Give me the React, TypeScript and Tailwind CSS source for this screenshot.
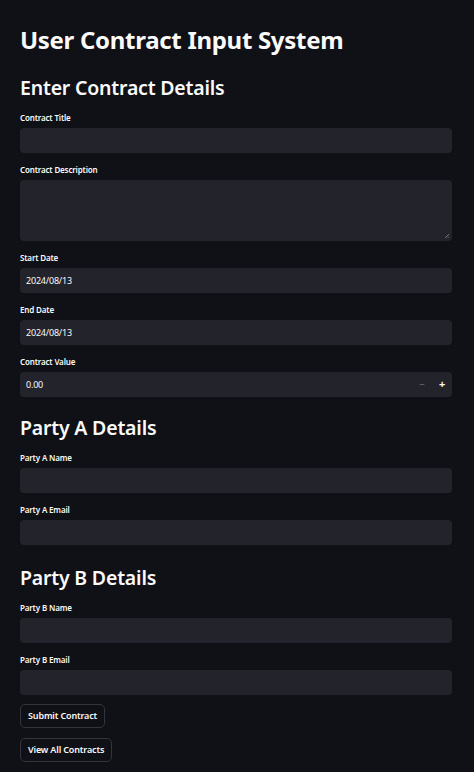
import { useState } from "react";

const Field = ({ label, value, tall }: { label: string; value?: string; tall?: boolean }) => {
  return (
    <div className="flex flex-col">
      <label className="text-[8px] font-semibold text-[#fafafa] leading-[12px] h-[12px] mb-[4px] tracking-[-0.15px]">{label}</label>
      {tall ? (
        <div className="relative h-[61px] rounded-[4px] bg-[#22232b]">
          <svg className="absolute right-[2px] bottom-[2px]" width="6" height="6" viewBox="0 0 6 6">
            <path d="M5 1 L1 5 M5 3.5 L3.5 5" stroke="#888" strokeWidth="0.8" />
          </svg>
        </div>
      ) : (
        <div className="h-[25px] rounded-[4px] bg-[#22232b] flex items-center px-[6px] text-[9px] text-[#fafafa] tracking-[-0.2px]">
          {value}
        </div>
      )}
    </div>
  );
};

const App = () => {
  const [value] = useState("0.00");
  return (
    <div
      className="min-h-[772px] bg-[#101116] text-[#fafafa] pl-[20px] pr-[22px] pt-[23px] pb-[10px]"
      style={{ fontFamily: '"Noto Sans", sans-serif' }}
    >
      <h1 className="text-[24px] font-bold leading-[34px] tracking-[-0.3px]">User Contract Input System</h1>
      <h2 className="text-[19.5px] font-semibold leading-[28px] mt-[17px] tracking-[-0.2px]">Enter Contract Details</h2>
      <div className="flex flex-col gap-[11px] mt-[10px]">
        <Field label="Contract Title" />
        <Field label="Contract Description" tall />
        <Field label="Start Date" value="2024/08/13" />
        <Field label="End Date" value="2024/08/13" />
        <div className="flex flex-col">
          <label className="text-[8px] font-semibold leading-[12px] h-[12px] mb-[4px] tracking-[-0.15px]">Contract Value</label>
          <div className="h-[25px] rounded-[4px] bg-[#22232b] flex items-center pl-[6px] text-[9px] tracking-[-0.2px]">
            <span className="flex-1">{value}</span>
            <button className="w-[20px] h-full flex items-center justify-center text-[#6b6c74] text-[10px]">−</button>
            <button className="w-[20px] h-full flex items-center justify-center text-[#fafafa] text-[11px] font-bold">+</button>
          </div>
        </div>
      </div>
      <h2 className="text-[19.5px] font-semibold leading-[28px] mt-[17px] tracking-[-0.2px]">Party A Details</h2>
      <div className="flex flex-col gap-[11px] mt-[10px]">
        <Field label="Party A Name" />
        <Field label="Party A Email" />
      </div>
      <h2 className="text-[19.5px] font-semibold leading-[28px] mt-[19px] tracking-[-0.2px]">Party B Details</h2>
      <div className="flex flex-col gap-[11px] mt-[10px]">
        <Field label="Party B Name" />
        <Field label="Party B Email" />
      </div>
      <div className="flex flex-col items-start gap-[10px] mt-[9px]">
        <button className="h-[24px] px-[7px] rounded-[5px] border border-[#33343c] text-[9px] font-semibold tracking-[-0.15px]">Submit Contract</button>
        <button className="h-[24px] px-[7px] rounded-[5px] border border-[#33343c] text-[9px] font-semibold tracking-[-0.15px]">View All Contracts</button>
      </div>
    </div>
  );
};

export default App;
